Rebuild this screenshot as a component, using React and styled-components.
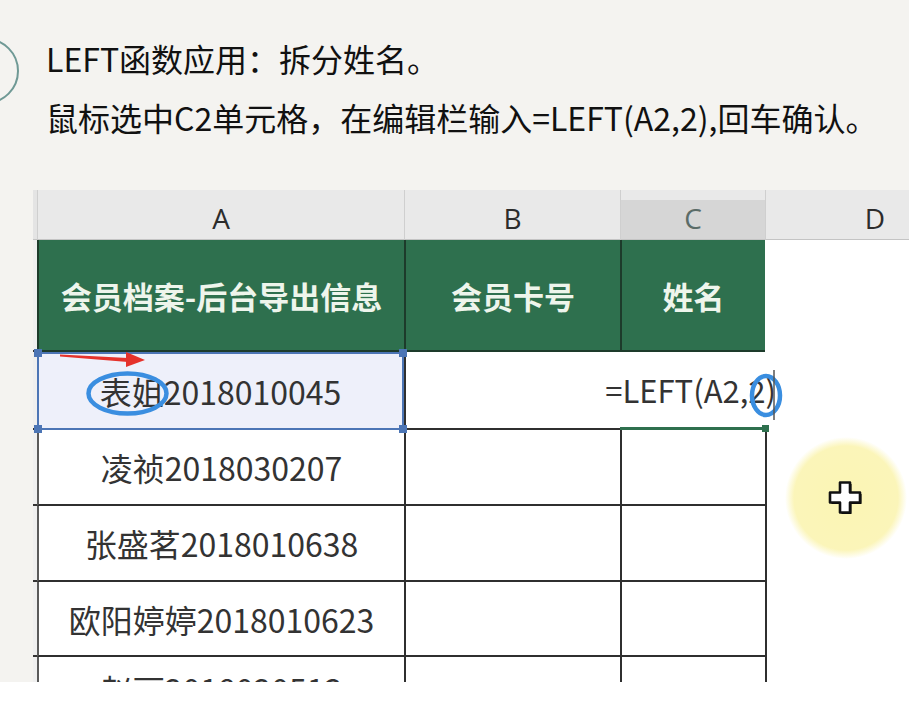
import React from 'react';
import styled, { createGlobalStyle } from 'styled-components';

const GlobalStyle = createGlobalStyle`
  html, body {
    margin: 0;
    padding: 0;
    background: #ffffff;
  }
  body {
    font-family: "Noto Sans CJK SC", "Noto Sans", sans-serif;
  }
`;

const rows = [
  { name: '表姐2018010045', selected: true },
  { name: '凌祯2018030207' },
  { name: '张盛茗2018010638' },
  { name: '欧阳婷婷2018010623' },
  { name: '赵丽2018020513' },
];

const rowHeights = [78, 76, 76, 75, 76];

function App() {
  return (
    <>
      <GlobalStyle />
      <Frame>
        <Ring />
        <Intro>
          <Line size={32}>LEFT函数应用：拆分姓名。</Line>
          <Line size={32} gap={15}>鼠标选中C2单元格，在编辑栏输入=LEFT(A2,2),回车确认。</Line>
        </Intro>

        <Sheet rowsTpl={`50px 112px ${rowHeights.join('px ')}px`}>
          <Strip head />
          <ColHead>A</ColHead>
          <ColHead>B</ColHead>
          <ColHead active>C</ColHead>
          <ColHead right>D</ColHead>

          <Strip />
          <HeadCell>会员档案-后台导出信息</HeadCell>
          <HeadCell>会员卡号</HeadCell>
          <HeadCell>姓名</HeadCell>
          <Blank open />

          {rows.map((r, i) => (
            <React.Fragment key={i}>
              <Strip />
              {r.selected ? (
                <SelCell>
                  {r.name}
                  <Handle corner="tl" />
                  <Handle corner="tr" />
                  <Handle corner="bl" />
                  <Handle corner="br" />
                </SelCell>
              ) : (
                <Cell first tall={i === rows.length - 1}>{r.name}</Cell>
              )}
              {r.selected ? (
                <>
                  <Cell />
                  <EditCell>
                    <Formula>=LEFT(A2,2)</Formula>
                    <EditHandle />
                  </EditCell>
                  <Blank open />
                </>
              ) : (
                <>
                  <Cell />
                  <Cell />
                  <Blank />
                </>
              )}
            </React.Fragment>
          ))}
        </Sheet>

        <Marks viewBox="0 0 909 682" width="909" height="682">
          <polygon points="60,354.5 128,358 128,362 60,356.5" fill="#e5322b" />
          <polygon points="126,352 145,360 126,367" fill="#e5322b" />
          <ellipse cx="127.5" cy="393.5" rx="39" ry="20" fill="none" stroke="#3a8ee0" strokeWidth="4.5" />
          <ellipse cx="766" cy="395.5" rx="14" ry="19.5" fill="none" stroke="#3a8ee0" strokeWidth="4.5" />
          <line x1="774" y1="370" x2="774" y2="420" stroke="#555" strokeWidth="1.5" />
        </Marks>

        <Halo>
          <svg width="36" height="36" viewBox="0 0 36 36">
            <path d="M13.5 4 H23.5 V14 H33.5 V24 H23.5 V34 H13.5 V24 H3.5 V14 H13.5 Z" fill="#000" />
            <path d="M12 2.5 H22 V12.5 H32 V22.5 H22 V32.5 H12 V22.5 H2 V12.5 H12 Z"
              fill="#fff" stroke="#111" strokeWidth="2.6" strokeLinejoin="round" />
          </svg>
        </Halo>
      </Frame>
    </>
  );
}

export default App;

const Frame = styled.div`
  position: relative;
  width: 909px;
  height: 682px;
  overflow: hidden;
  background: #f4f3f0;
  display: flex;
  flex-direction: column;
`;

const Ring = styled.div`
  position: absolute;
  left: -47px;
  top: 38px;
  width: 62px;
  height: 62px;
  border: 2px solid #6f9995;
  border-radius: 50%;
`;

const Intro = styled.div`
  height: 190px;
  box-sizing: border-box;
  padding: 36px 0 0 46px;
  color: #111;
`;

const Line = styled.div`
  font-size: ${p => p.size}px;
  line-height: 44px;
  margin-top: ${p => p.gap || 0}px;
  white-space: nowrap;
`;

const Sheet = styled.div`
  flex: 1;
  margin-left: 33px;
  display: grid;
  grid-template-columns: 4px 367px 216px 145px 1fr;
  grid-template-rows: ${p => p.rowsTpl};
  overflow: hidden;
  background: #ffffff;
`;

const Strip = styled.div`
  background: ${p => (p.head ? '#e4e4e4' : '#efefef')};
  border-bottom: ${p => (p.head ? '1px solid #c4c4c4' : '2px solid #333')};
  box-sizing: border-box;
`;

const ColHead = styled.div`
  display: flex;
  align-items: center;
  justify-content: ${p => (p.right ? 'flex-end' : 'center')};
  padding: 6px ${p => (p.right ? '24px' : '0')} 0 0;
  box-sizing: border-box;
  font-family: "Open Sans", "Noto Sans", sans-serif;
  font-size: 28px;
  color: ${p => (p.active ? '#5b6c68' : '#2c2c2c')};
  background: ${p => (p.active
    ? 'linear-gradient(#e9e9e9 0 10px, #d6d6d6 10px)'
    : '#e9e9e9')};
  border-left: 1px solid #cfcfcf;
  border-bottom: 1px solid #c4c4c4;
`;

const HeadCell = styled.div`
  display: flex;
  align-items: center;
  justify-content: center;
  background: #2e704e;
  color: #eef5ec;
  font-size: 31px;
  font-weight: 700;
  border-left: 2px solid #1d3b2b;
  border-bottom: 2px solid #1d3b2b;
  box-sizing: border-box;
  white-space: nowrap;
`;

const Blank = styled.div`
  background: #ffffff;
  border-left: 2px solid ${p => (p.open ? 'transparent' : '#2f2f2f')};
`;

const Cell = styled.div`
  display: flex;
  align-items: ${p => (p.tall ? 'flex-start' : 'center')};
  justify-content: center;
  padding-top: ${p => (p.tall ? '10px' : '0')};
  background: #ffffff;
  color: #333;
  font-size: 32px;
  line-height: 44px;
  white-space: nowrap;
  border-left: 2px solid ${p => (p.first ? '#5a5a5a' : '#2f2f2f')};
  border-bottom: 2px solid #2f2f2f;
  box-sizing: border-box;
`;

const SelCell = styled.div`
  position: relative;
  display: flex;
  align-items: center;
  justify-content: center;
  background: #eef0fa;
  color: #333;
  font-size: 32px;
  white-space: nowrap;
  border: 2px solid #4c75b5;
  box-sizing: border-box;
`;

const corners = {
  tl: 'top: -5px; left: -5px;',
  tr: 'top: -5px; right: -5px;',
  bl: 'bottom: -5px; left: -5px;',
  br: 'bottom: -5px; right: -5px;',
};

const Handle = styled.span`
  position: absolute;
  ${p => corners[p.corner]}
  width: 8px;
  height: 8px;
  background: #4c75b5;
`;

const EditCell = styled.div`
  position: relative;
  display: flex;
  align-items: center;
  justify-content: flex-end;
  background: #ffffff;
  border-bottom: 3px solid #2e704e;
  box-sizing: border-box;
  overflow: visible;
`;

const Formula = styled.span`
  margin-right: -11px;
  font-size: 31px;
  color: #333;
  white-space: nowrap;
`;

const EditHandle = styled.span`
  position: absolute;
  right: -4px;
  bottom: -5px;
  width: 7px;
  height: 7px;
  background: #2e704e;
`;

const Marks = styled.svg`
  position: absolute;
  left: 0;
  top: 0;
  pointer-events: none;
`;

const Halo = styled.div`
  position: absolute;
  left: 785px;
  top: 437px;
  width: 122px;
  height: 122px;
  border-radius: 50%;
  background: radial-gradient(circle, #fbf5b4 0, #fbf5b9 52px, rgba(251, 245, 185, 0) 61px);
  display: flex;
  align-items: center;
  justify-content: center;
`;
